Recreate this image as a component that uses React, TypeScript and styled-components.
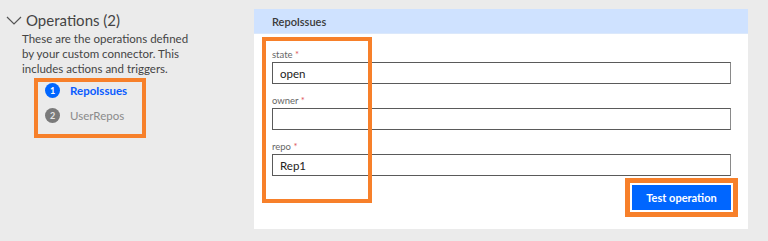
import React from "react";
import styled, { createGlobalStyle } from "styled-components";

const Global = createGlobalStyle`
  html, body { margin: 0; padding: 0; background: #ebebeb; }
  body { font-family: "Segoe UI", Lato, "Noto Sans", sans-serif; color: #333; }
`;

const ORANGE = "#f7802a";
const BLUE = "#0066ff";

const Page = styled.div`
  display: flex;
  align-items: flex-start;
  width: 768px;
  height: 241px;
  box-sizing: border-box;
  overflow: hidden;
`;

const Side = styled.div`
  width: 254px;
  flex: none;
  padding: 9px 0 0 6px;
  box-sizing: border-box;
`;

const SectionHead = styled.div`
  display: flex;
  align-items: center;
  gap: 4px;
  font-size: 15px;
  line-height: 22px;
  color: #444;
`;

const Desc = styled.p`
  margin: 0 0 0 16px;
  width: 172px;
  font-size: 11.5px;
  line-height: 15px;
  color: #444;
`;

const OpList = styled.div`
  margin: 2px 0 0 28px;
  width: 112px;
  height: 60px;
  box-sizing: border-box;
  border: 4px solid ${ORANGE};
  padding: 1px 0 0 7px;
  display: flex;
  flex-direction: column;
  gap: 10px;
`;

const OpItem = styled.div<{ $active?: boolean }>`
  display: flex;
  align-items: center;
  gap: 10px;
  font-size: 11.5px;
  line-height: 15px;
  font-weight: ${(p) => (p.$active ? 700 : 400)};
  color: ${(p) => (p.$active ? "#0a5cff" : "#8a8a8a")};
`;

const Num = styled.span<{ $active?: boolean }>`
  width: 15px;
  height: 15px;
  border-radius: 50%;
  flex: none;
  display: flex;
  align-items: center;
  justify-content: center;
  font-size: 9px;
  font-weight: 700;
  background: ${(p) => (p.$active ? BLUE : "#7a7a7a")};
  color: ${(p) => (p.$active ? "#fff" : "#e4e4e4")};
`;

const Card = styled.div`
  position: relative;
  margin-top: 9px;
  width: 494px;
  height: 220px;
  background: #fff;
  display: flex;
  flex-direction: column;
`;

const CardHead = styled.div`
  height: 25px;
  background: #cfe2ff;
  border-bottom: 1px solid #dbe8fb;
  box-sizing: border-box;
  padding-left: 18px;
  display: flex;
  align-items: center;
  font-size: 11px;
  font-weight: 600;
  color: #3a3a3a;
`;

const Form = styled.div`
  padding: 14px 17px 0 18px;
  display: flex;
  flex-direction: column;
`;

const Field = styled.div`
  display: flex;
  flex-direction: column;
  margin-bottom: 10px;
`;

const Label = styled.label`
  font-size: 9.5px;
  line-height: 14px;
  color: #666;
`;

const Req = styled.span`
  color: #e05a60;
`;

const Input = styled.div`
  height: 22px;
  box-sizing: border-box;
  border: 1px solid #5a5a5a;
  border-right-color: #8a8a8a;
  padding-left: 7px;
  display: flex;
  align-items: center;
  font-size: 11.5px;
  color: #222;
`;

const Actions = styled.div`
  display: flex;
  justify-content: flex-end;
  margin: -8px -7px 0 0;
`;

const BtnFrame = styled.div`
  border: 5px solid ${ORANGE};
  padding: 2px;
  background: #fff;
  display: flex;
`;

const Button = styled.button`
  width: 99px;
  height: 25px;
  border: none;
  background: ${BLUE};
  color: #fff;
  font-family: inherit;
  font-size: 11px;
  font-weight: 700;
  padding: 0;
  cursor: pointer;
`;

const Highlight = styled.div`
  position: absolute;
  left: 8px;
  top: 28px;
  width: 110px;
  height: 166px;
  box-sizing: border-box;
  border: 4px solid ${ORANGE};
  pointer-events: none;
`;

const fields = [
  { name: "state", value: "open" },
  { name: "owner", value: "" },
  { name: "repo", value: "Rep1" },
];

export default function App() {
  return (
    <>
      <Global />
      <Page>
        <Side>
          <SectionHead>
            <svg width="16" height="9" viewBox="0 0 16 9">
              <path d="M1 1 L8 8 L15 1" fill="none" stroke="#555" strokeWidth="1.2" />
            </svg>
            Operations (2)
          </SectionHead>
          <Desc>
            These are the operations defined by your custom connector. This includes actions and
            triggers.
          </Desc>
          <OpList>
            <OpItem $active>
              <Num $active>1</Num>
              RepoIssues
            </OpItem>
            <OpItem>
              <Num>2</Num>
              UserRepos
            </OpItem>
          </OpList>
        </Side>
        <Card>
          <CardHead>RepoIssues</CardHead>
          <Form>
            {fields.map((f) => (
              <Field key={f.name}>
                <Label>
                  {f.name} <Req>*</Req>
                </Label>
                <Input>{f.value}</Input>
              </Field>
            ))}
            <Actions>
              <BtnFrame>
                <Button>Test operation</Button>
              </BtnFrame>
            </Actions>
          </Form>
          <Highlight />
        </Card>
      </Page>
    </>
  );
}
